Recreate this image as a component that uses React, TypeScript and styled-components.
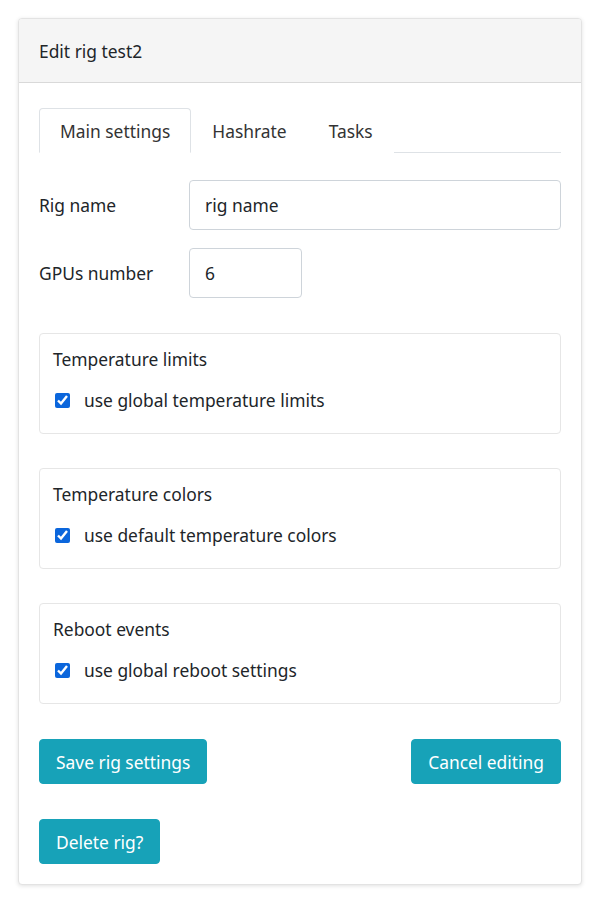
import React from 'react';
import styled, { createGlobalStyle } from 'styled-components';

const GlobalStyle = createGlobalStyle`
  html, body {
    margin: 0;
    padding: 0;
    background: #fff;
  }
  body {
    font-family: "Noto Sans", "Open Sans", Arial, sans-serif;
    font-size: 17.4px;
    color: #212529;
  }
  * {
    box-sizing: border-box;
  }
`;

const Card = styled.div`
  margin: 18px;
  background: #fff;
  border: 1px solid #e3e3e3;
  border-radius: 4px;
  box-shadow: 0 1px 4px rgba(0, 0, 0, 0.12);
  overflow: hidden;
`;

const CardHeader = styled.div`
  height: 64px;
  display: flex;
  align-items: center;
  padding: 0 20px;
  background: #f5f5f5;
  border-bottom: 1px solid #d9d9d9;
`;

const CardBody = styled.div`
  padding: 25px 20px 20px;
  display: flex;
  flex-direction: column;
`;

const Tabs = styled.ul`
  display: flex;
  list-style: none;
  margin: 0;
  padding: 0;
  height: 45px;
  border-bottom: 1px solid #dee2e6;
`;

const Tab = styled.li<{ $active?: boolean }>`
  display: flex;
  align-items: center;
  height: 45px;
  padding: 0 20px;
  margin-bottom: -1px;
  border: 1px solid ${p => (p.$active ? '#dee2e6' : 'transparent')};
  border-bottom-color: ${p => (p.$active ? '#fff' : 'transparent')};
  border-radius: 4px 4px 0 0;
  background: #fff;
  color: #333;
`;

const FormRow = styled.div<{ $top: number }>`
  display: flex;
  align-items: center;
  margin-top: ${p => p.$top}px;
`;

const Label = styled.label`
  width: 150px;
`;

const Input = styled.input<{ $width?: number }>`
  height: 50px;
  width: ${p => (p.$width ? `${p.$width}px` : 'auto')};
  flex: ${p => (p.$width ? '0 0 auto' : '1')};
  padding: 0 15px;
  font: inherit;
  color: #212529;
  border: 1px solid #ced4da;
  border-radius: 4px;
  outline: none;
`;

const Groups = styled.div`
  display: flex;
  flex-direction: column;
  gap: 34px;
  margin-top: 35px;
`;

const Group = styled.div`
  height: 101px;
  padding: 12px 13px;
  border: 1px solid #e6e6e6;
  border-radius: 4px;
`;

const Legend = styled.div`
  line-height: 26px;
  margin-bottom: 15px;
`;

const CheckRow = styled.label`
  display: flex;
  align-items: center;
  line-height: 26px;
  padding-left: 2px;
`;

const Check = styled.input`
  width: 15px;
  height: 15px;
  margin: 0 14px 0 0;
  accent-color: #0b66dc;
`;

const ButtonRow = styled.div<{ $top: number }>`
  display: flex;
  justify-content: space-between;
  margin-top: ${p => p.$top}px;
`;

const Button = styled.button`
  height: 45px;
  padding: 0 16px;
  font: inherit;
  color: #fff;
  background: #17a2b8;
  border: 1px solid #17a2b8;
  border-radius: 4px;
  cursor: pointer;
`;

const groups = [
  { title: 'Temperature limits', label: 'use global temperature limits' },
  { title: 'Temperature colors', label: 'use default temperature colors' },
  { title: 'Reboot events', label: 'use global reboot settings' },
];

export default function App() {
  return (
    <>
      <GlobalStyle />
      <Card>
        <CardHeader>Edit rig test2</CardHeader>
        <CardBody>
          <Tabs>
            <Tab $active>Main settings</Tab>
            <Tab>Hashrate</Tab>
            <Tab>Tasks</Tab>
          </Tabs>

          <FormRow $top={27}>
            <Label>Rig name</Label>
            <Input defaultValue="rig name" />
          </FormRow>
          <FormRow $top={18}>
            <Label>GPUs number</Label>
            <Input $width={113} defaultValue="6" />
          </FormRow>

          <Groups>
            {groups.map(g => (
              <Group key={g.title}>
                <Legend>{g.title}</Legend>
                <CheckRow>
                  <Check type="checkbox" defaultChecked />
                  {g.label}
                </CheckRow>
              </Group>
            ))}
          </Groups>

          <ButtonRow $top={35}>
            <Button>Save rig settings</Button>
            <Button>Cancel editing</Button>
          </ButtonRow>
          <ButtonRow $top={35}>
            <Button>Delete rig?</Button>
          </ButtonRow>
        </CardBody>
      </Card>
    </>
  );
}
